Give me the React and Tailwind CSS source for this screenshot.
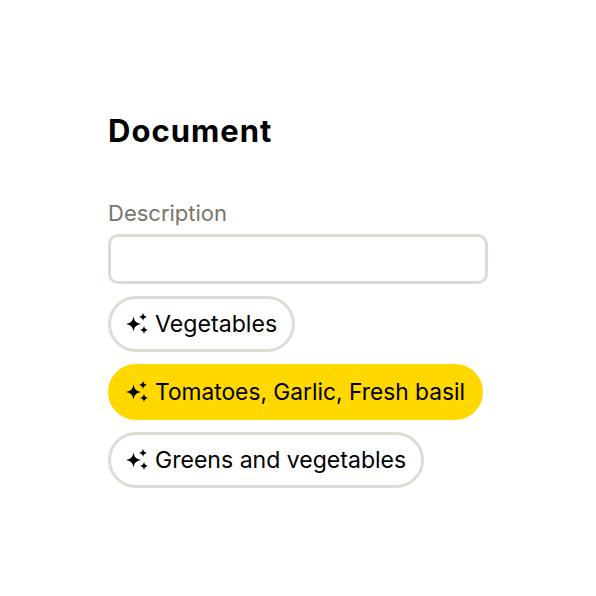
function Sparkle() {
  return (
    <svg width="24" height="24" viewBox="0 0 24 24" fill="currentColor" className="shrink-0">
      <path d="M8.5 4.2C9.2 8.8 10.8 11 16 12 10.8 13 9.2 15.2 8.5 19.8 7.8 15.2 6.2 13 1 12 6.2 11 7.8 8.8 8.5 4.2Z" />
      <path d="M18 .8C18.4 3.2 19.3 4.3 22 4.9 19.3 5.5 18.4 6.6 18 9 17.6 6.6 16.7 5.5 14 4.9 16.7 4.3 17.6 3.2 18 .8Z" />
      <path d="M19 13.8C19.4 16.2 20.3 17.3 23 17.9 20.3 18.5 19.4 19.6 19 22 18.6 19.6 17.7 18.5 15 17.9 17.7 17.3 18.6 16.2 19 13.8Z" />
    </svg>
  )
}

function Chip({ label, active, textClass }) {
  return (
    <div
      className={
        active
          ? 'flex h-14 w-fit items-center gap-[6px] rounded-full border-[3px] border-[#ffd800] bg-[#ffd800] pl-[14px] pr-[15px] text-black'
          : 'flex h-14 w-fit items-center gap-[6px] rounded-full border-[3px] border-[#dfddd3] bg-white pl-[14px] pr-[15px] text-black'
      }
    >
      <Sparkle />
      <span className={textClass}>{label}</span>
    </div>
  )
}

export default function App() {
  return (
    <div className="flex h-[596px] w-[596px] flex-col bg-white pl-[108px] pt-[113px] font-['Inter',sans-serif]">
      <h1 className="text-[31px] font-bold leading-[36px] tracking-[1px] text-black">Document</h1>
      <label className="mt-[50px] text-[22px] leading-[28px] text-[#77766a]">Description</label>
      <div className="mt-[7px] h-[50px] w-[380px] rounded-[10px] border-[3px] border-[#dfddd3] bg-white" />
      <div className="mt-3 flex flex-col gap-3">
        <Chip label="Vegetables" textClass="text-[23.15px]" />
        <Chip label="Tomatoes, Garlic, Fresh basil" active textClass="text-[22.75px]" />
        <Chip label="Greens and vegetables" textClass="text-[23.05px]" />
      </div>
    </div>
  )
}
